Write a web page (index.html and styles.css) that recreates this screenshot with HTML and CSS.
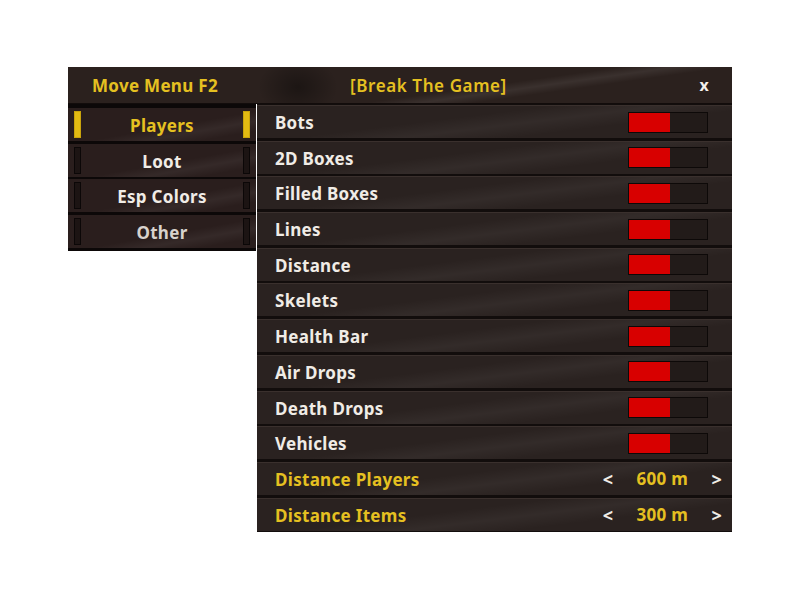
FILE: index.html
```html
<!DOCTYPE html>
<html>
<head>
<meta charset="utf-8">
<link rel="stylesheet" href="styles.css">
</head>
<body>
<div class="window">
  <div class="header">
    <span class="title-left">Move Menu F2</span>
    <span class="title-center">[Break The Game]</span>
    <span class="close">x</span>
  </div>
  <div class="main">
    <div class="side">
      <div class="tab active"><span class="ind"></span><span class="tab-label">Players</span><span class="ind"></span></div>
      <div class="tab"><span class="ind"></span><span class="tab-label">Loot</span><span class="ind"></span></div>
      <div class="tab"><span class="ind"></span><span class="tab-label">Esp Colors</span><span class="ind"></span></div>
      <div class="tab dim"><span class="ind"></span><span class="tab-label">Other</span><span class="ind"></span></div>
    </div>
    <div class="list">
      <div class="row"><span class="label">Bots</span><span class="toggle"><span class="fill"></span></span></div>
      <div class="row"><span class="label">2D Boxes</span><span class="toggle"><span class="fill"></span></span></div>
      <div class="row"><span class="label">Filled Boxes</span><span class="toggle"><span class="fill"></span></span></div>
      <div class="row"><span class="label">Lines</span><span class="toggle"><span class="fill"></span></span></div>
      <div class="row"><span class="label">Distance</span><span class="toggle"><span class="fill"></span></span></div>
      <div class="row"><span class="label">Skelets</span><span class="toggle"><span class="fill"></span></span></div>
      <div class="row"><span class="label">Health Bar</span><span class="toggle"><span class="fill"></span></span></div>
      <div class="row"><span class="label">Air Drops</span><span class="toggle"><span class="fill"></span></span></div>
      <div class="row"><span class="label">Death Drops</span><span class="toggle"><span class="fill"></span></span></div>
      <div class="row"><span class="label">Vehicles</span><span class="toggle"><span class="fill"></span></span></div>
      <div class="row"><span class="label gold">Distance Players</span><span class="stepper"><span class="arrow">&lt;</span><span class="value">600 m</span><span class="arrow">&gt;</span></span></div>
      <div class="row"><span class="label gold">Distance Items</span><span class="stepper"><span class="arrow">&lt;</span><span class="value">300 m</span><span class="arrow">&gt;</span></span></div>
    </div>
  </div>
</div>
</body>
</html>
```

FILE: styles.css
```css
html, body {
  margin: 0;
  padding: 0;
  background: #ffffff;
}
body {
  font-family: "Noto Sans", "DejaVu Sans", sans-serif;
  font-weight: 700;
  font-size: 17px;
  letter-spacing: 0.3px;
  color: #f0ece6;
}
.window {
  margin: 67px 0 0 68px;
  width: 664px;
}
.header {
  height: 36px;
  display: flex;
  align-items: center;
  background:
    radial-gradient(ellipse 40px 30px at 230px 20px, rgba(0,0,0,0.35), rgba(0,0,0,0) 100%),
    linear-gradient(172deg, rgba(255,255,255,0) 60%, rgba(255,255,255,0.07) 66%, rgba(255,255,255,0) 72%),
    #2b211e;
  border-bottom: 1px solid #120c0b;
}
.title-left {
  color: #e5c021;
  margin-left: 24px;
  width: 258px;
}
.title-center {
  color: #e5c021;
  font-weight: 600;
  letter-spacing: 0.6px;
}
.close {
  margin-left: auto;
  margin-right: 23px;
  font-size: 16px;
  color: #f4f0ec;
}
.main {
  display: flex;
  align-items: flex-start;
  gap: 1px;
}
.side {
  width: 188px;
  background: #0c0808;
  display: flex;
  flex-direction: column;
  gap: 2.5px;
  padding-top: 4px;
  padding-bottom: 3.5px;
}
.tab {
  height: 33px;
  display: flex;
  align-items: center;
  padding: 0 6px;
  background:
    linear-gradient(170deg, rgba(255,255,255,0) 55%, rgba(255,255,255,0.05) 70%, rgba(255,255,255,0) 85%),
    #2a1e1d;
  box-sizing: border-box;
}
.ind {
  width: 7px;
  height: 27px;
  box-sizing: border-box;
  background: #1c1413;
  border: 1px solid #0b0707;
}
.tab.active .ind {
  background: #e3bb12;
  border-color: #c9a40c;
}
.tab-label {
  flex: 1;
  text-align: center;
  padding-top: 2px;
}
.tab.active .tab-label {
  color: #e5c021;
}
.tab.dim .tab-label {
  color: #d8d2cc;
}
.list {
  width: 475px;
  background: #120d0c;
  display: flex;
  flex-direction: column;
  gap: 2.7px;
  padding: 1px 0 1px 0;
}
.row {
  height: 33px;
  display: flex;
  align-items: center;
  padding: 0 24px 0 18px;
  background:
    linear-gradient(173deg, rgba(255,255,255,0) 40%, rgba(255,255,255,0.045) 55%, rgba(255,255,255,0) 70%),
    #2a2220;
  border-top: 1px solid #3a302d;
  box-sizing: border-box;
}
.label {
  flex: 1;
  padding-top: 1px;
}
.gold {
  color: #e5c021;
}
.toggle {
  width: 80px;
  height: 21px;
  box-sizing: border-box;
  border: 1px solid #0d0908;
  background: #221b19;
  display: flex;
}
.fill {
  width: 41px;
  height: 100%;
  background: #d80000;
}
.stepper {
  display: flex;
  align-items: center;
  margin-right: -14px;
}
.arrow {
  color: #f0ece6;
  font-size: 18px;
}
.value {
  color: #e5c021;
  width: 98px;
  text-align: center;
}
```
